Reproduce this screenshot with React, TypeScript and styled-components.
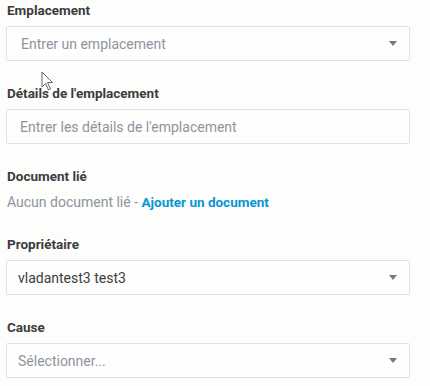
import React from 'react'
import styled, {createGlobalStyle} from "styled-components";

const GlobalStyle = createGlobalStyle`
  html, body {
    margin: 0;
    padding: 0;
    background: #fdfdfc;
  }
  body {
    font-family: Roboto, "Noto Sans", sans-serif;
  }
`

const Form = styled.div`
  position: relative;
  width: 404px;
  padding: 0 6px;
  display: flex;
  flex-direction: column;
  gap: 22px;
`

const Field = styled.div`
  display: flex;
  flex-direction: column;
`

const Label = styled.div`
  font-size: 13.5px;
  font-weight: 700;
  line-height: 20px;
  color: #3c3c3c;
  padding-left: 1px;
  margin-bottom: 6px;
`

const Box = styled.div<{ $pad: number }>`
  box-sizing: border-box;
  height: 35px;
  border: 1px solid #dfe3e8;
  border-radius: 2px;
  background: #fefefe;
  display: flex;
  align-items: center;
  padding: 0 12px 0 ${p => p.$pad}px;
  font-size: 14px;
`

const Value = styled.span<{ $placeholder?: boolean }>`
  flex: 1;
  color: ${p => p.$placeholder ? '#8c959d' : '#3c3c3c'};
`

const Caret = styled.span`
  width: 0;
  height: 0;
  border-left: 4px solid transparent;
  border-right: 4px solid transparent;
  border-top: 5px solid #6e7a85;
`

const LinkLine = styled.div`
  font-size: 14px;
  line-height: 20px;
  color: #8c959d;
  padding-left: 1px;
`

const AddLink = styled.a`
  color: #0696d7;
  font-weight: 700;
  text-decoration: none;
  font-size: 13.5px;
`

const Pointer = styled.svg`
  position: absolute;
  left: 41px;
  top: 71px;
`

type SelectProps = { value: string, placeholder?: boolean, pad?: number }

const SelectBox: React.FC<SelectProps> = ({value, placeholder, pad = 11}) =>
  <Box $pad={pad}>
    <Value $placeholder={placeholder}>{value}</Value>
    <Caret/>
  </Box>

export default function App() {
  return <>
    <GlobalStyle/>
    <Form>
      <Field>
        <Label>Emplacement</Label>
        <SelectBox value="Entrer un emplacement" placeholder pad={14}/>
      </Field>
      <Field>
        <Label>Détails de l'emplacement</Label>
        <Box $pad={13}>
          <Value $placeholder>Entrer les détails de l'emplacement</Value>
        </Box>
      </Field>
      <Field>
        <Label>Document lié</Label>
        <LinkLine>Aucun document lié - <AddLink href="#">Ajouter un document</AddLink></LinkLine>
      </Field>
      <Field>
        <Label>Propriétaire</Label>
        <SelectBox value="vladantest3 test3"/>
      </Field>
      <Field>
        <Label>Cause</Label>
        <SelectBox value="Sélectionner..." placeholder/>
      </Field>
      <Pointer width="14" height="21" viewBox="0 0 14 21">
        <path d="M1 1 L1 16 L4.5 12.5 L7.5 19 L9.5 18 L6.5 11.5 L11.5 11.5 Z"
              fill="#fff" stroke="#666" strokeWidth="1" strokeLinejoin="round"/>
      </Pointer>
    </Form>
  </>
}
